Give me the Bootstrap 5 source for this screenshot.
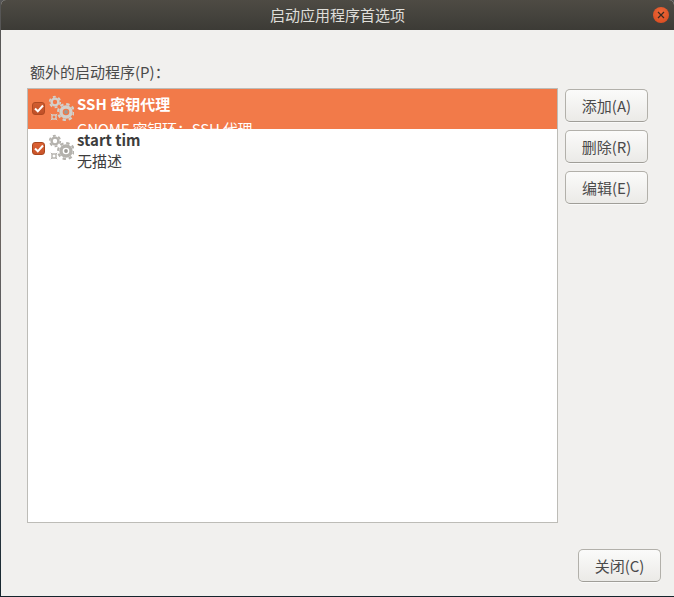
<!DOCTYPE html>
<html lang="zh">
<head>
<meta charset="utf-8">
<title>启动应用程序首选项</title>
<link href="https://cdn.jsdelivr.net/npm/bootstrap@5.3.0/dist/css/bootstrap.min.css" rel="stylesheet">
<style>
html,body{height:100%;}
body{margin:0;background:linear-gradient(#555,#6a6460 40%,#46505c 70%,#14242c);font-family:"Noto Sans CJK SC","Noto Sans",sans-serif;color:#3d3d3d;font-size:15px;overflow:hidden;}
.win{width:674px;height:596px;padding-left:1px;}
.win-inner{height:100%;background:#f1f0ee;border-radius:5px 5px 0 0;overflow:hidden;display:flex;flex-direction:column;}
.tbar{height:30px;flex:none;background:linear-gradient(#4e4b44,#3c3b36);color:#dfded9;font-size:15px;line-height:30px;text-align:center;position:relative;}
.xbtn{position:absolute;right:5px;top:7px;width:16px;height:16px;border-radius:50%;background:radial-gradient(circle at 50% 35%,#f0693a,#d4471c);border:0;padding:0;display:flex;align-items:center;justify-content:center;}
.wbody{flex:1;padding:32px 13px 14px 26px;display:flex;flex-direction:column;}
.lbl{font-size:15px;line-height:20px;margin-bottom:6px;padding-left:3px;color:#4a4a4a;}
.mainrow{height:435px;gap:7px;}
.listbox{width:531px;background:#fff;border:1px solid #bdbcb7;overflow:hidden;}
.app-row{display:flex;align-items:flex-start;}
.app-row.sel{height:40px;background:#f27a49;color:#fff;overflow:hidden;}
.app-row.plain{height:auto;color:#3d3d3d;}
.chk{width:13px;height:13px;margin:13px 0 0 4px;flex:none;border-radius:3px;background:linear-gradient(#dc6234,#c9542a);border:1px solid #a9471f;display:flex;align-items:center;justify-content:center;}
.sel .chk{background:linear-gradient(#d05c30,#c05028);border-color:#b04a22;}
.gears{width:26px;height:26px;flex:none;margin:6px 0 0 3px;color:#b4b2ad;}
.sel .gears{color:#d2d0cb;}
.appt{margin-left:3px;}
.app-name{font-weight:700;font-size:15px;line-height:18px;padding-top:6px;}
.app-desc{font-size:15px;line-height:20px;padding-top:6px;}
.sel .app-desc{letter-spacing:-.2px;}
.plain .chk{margin-top:13px;}
.plain .gears{margin-top:5px;}
.plain .app-name{padding-top:2px;}
.plain .app-desc{padding-top:2px;}
.sidebtns{width:83px;gap:8px;padding-top:1px;}
.gbtn{width:83px;height:33px;padding:0;font-size:15px;line-height:31px;color:#4a4a4a;background:linear-gradient(#fbfbfa,#ebeae7);border:1px solid #b2b0aa;border-bottom-color:#a09e98;border-radius:5px;box-shadow:0 1px 0 rgba(255,255,255,.6);}
.closerow{margin-top:auto;}
</style>
</head>
<body>
<svg width="0" height="0" class="position-absolute">
<defs>
<symbol id="gearset" viewBox="0 0 26 26">
<g fill="none" stroke="currentColor">
<circle cx="7" cy="7" r="3.4" stroke-width="2.4"/>
<circle cx="7" cy="7" r="5.3" stroke-width="1.7" stroke-dasharray="2.9 2.65"/>
<circle cx="18" cy="17" r="5" stroke-width="3.4"/>
<circle cx="18" cy="17" r="7.9" stroke-width="2.2" stroke-dasharray="3.4 2.8"/>
<rect x="4" y="20" width="4" height="4" stroke-width="1.4"/>
<path d="M2.8 18.8l1.5 1.5M9.2 18.8l-1.5 1.5M2.8 25.2l1.5-1.5M9.2 25.2l-1.5-1.5"/>
</g>
<circle cx="18" cy="17" r="1.9" fill="#9c9a95"/>
</symbol>
</defs>
</svg>
<div class="win">
<div class="win-inner">
<div class="tbar">启动应用程序首选项
<button class="xbtn" aria-label="关闭"><svg width="8" height="8" viewBox="0 0 8 8"><path d="M1 1l6 6M7 1l-6 6" stroke="#3a2a20" stroke-width="1.2"/></svg></button>
</div>
<div class="wbody">
<div class="lbl">额外的启动程序(P)：</div>
<div class="d-flex mainrow">
<div class="listbox">
<div class="app-row sel">
<span class="chk"><svg width="10" height="9" viewBox="0 0 10 9"><path d="M1 4.5l2.8 2.8L9 1.5" fill="none" stroke="#fff" stroke-width="2"/></svg></span>
<svg class="gears"><use href="#gearset"/></svg>
<div class="appt"><div class="app-name">SSH 密钥代理</div><div class="app-desc">GNOME 密钥环：SSH 代理</div></div>
</div>
<div class="app-row plain">
<span class="chk"><svg width="10" height="9" viewBox="0 0 10 9"><path d="M1 4.5l2.8 2.8L9 1.5" fill="none" stroke="#fff" stroke-width="2"/></svg></span>
<svg class="gears"><use href="#gearset"/></svg>
<div class="appt"><div class="app-name">start tim</div><div class="app-desc">无描述</div></div>
</div>
</div>
<div class="d-flex flex-column sidebtns">
<button class="btn gbtn">添加(A)</button>
<button class="btn gbtn">删除(R)</button>
<button class="btn gbtn">编辑(E)</button>
</div>
</div>
<div class="d-flex justify-content-end closerow">
<button class="btn gbtn">关闭(C)</button>
</div>
</div>
</div>
</div>
</body>
</html>
